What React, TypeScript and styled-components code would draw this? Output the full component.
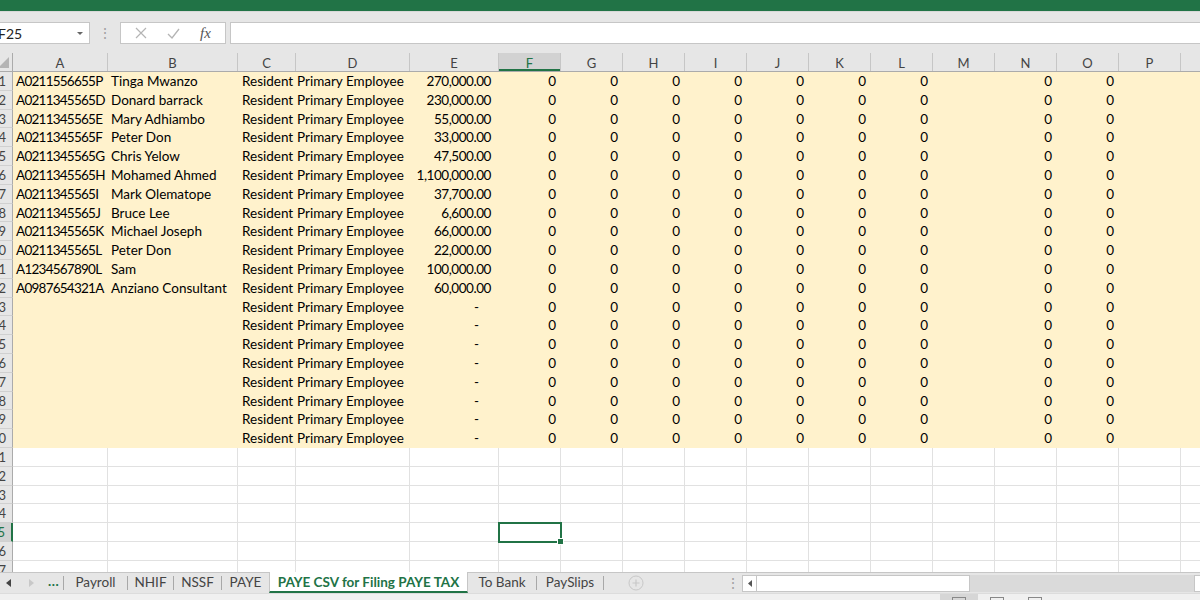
import React from "react";
import styled, { createGlobalStyle } from "styled-components";

const GlobalStyle = createGlobalStyle`
  html, body {
    margin: 0;
    padding: 0;
    background: #ffffff;
  }
  body {
    font-family: "Lato", "Liberation Sans", sans-serif;
  }
`;

const GREEN = "#217346";
const YELLOW = "#fff2cc";

const colWidths = [30, 95, 130, 58, 114, 89, ...Array(12).fill(62)];
const letters = "ABCDEFGHIJKLMNOPQ".split("");
const ROW_COUNT = 27;
const ROW_H = 18.8;

// integer row heights that add up to ~18.8px each, so grid lines stay crisp
const rowTrack = Array.from({ length: ROW_COUNT }, (_, i) =>
  Math.round((i + 1) * ROW_H) - Math.round(i * ROW_H)
)
  .map((h) => `${h}px`)
  .join(" ");

const people = [
  ["A0211556655P", "Tinga Mwanzo", "270,000.00"],
  ["A0211345565D", "Donard barrack", "230,000.00"],
  ["A0211345565E", "Mary Adhiambo", "55,000.00"],
  ["A0211345565F", "Peter Don", "33,000.00"],
  ["A0211345565G", "Chris Yelow", "47,500.00"],
  ["A0211345565H", "Mohamed Ahmed", "1,100,000.00"],
  ["A0211345565I", "Mark Olematope", "37,700.00"],
  ["A0211345565J", "Bruce Lee", "6,600.00"],
  ["A0211345565K", "Michael Joseph", "66,000.00"],
  ["A0211345565L", "Peter Don", "22,000.00"],
  ["A1234567890L", "Sam", "100,000.00"],
  ["A0987654321A", "Anziano Consultant", "60,000.00"],
];

const tabs = [
  { name: "Payroll", w: 63 },
  { name: "NHIF", w: 45 },
  { name: "NSSF", w: 47 },
  { name: "PAYE", w: 47 },
  { name: "PAYE CSV for Filing PAYE TAX", w: 199, active: true },
  { name: "To Bank", w: 68 },
  { name: "PaySlips", w: 66 },
];

const FILLED_ROWS = 20;
const SELECTED_ROW = 25;
const SELECTED_COL = 5; // F

type CellData = { text: string; align: "left" | "right"; pad: number; spacing?: number };

const getCell = (row: number, col: number): CellData => {
  const empty: CellData = { text: "", align: "left", pad: 3 };
  if (row > FILLED_ROWS) return empty;
  const p = people[row - 1];
  switch (col) {
    case 0:
      return { text: p ? p[0] : "", align: "left", pad: 3, spacing: -0.75 };
    case 1:
      return { text: p ? p[1] : "", align: "left", pad: 3 };
    case 2:
      return { text: "Resident", align: "left", pad: 4 };
    case 3:
      return { text: "Primary Employee", align: "left", pad: 1 };
    case 4:
      return p
        ? { text: p[2], align: "right", pad: 7, spacing: -0.45 }
        : { text: "-", align: "right", pad: 19 };
    case 12:
    case 15:
    case 16:
      return empty;
    default:
      return { text: "0", align: "right", pad: 4 };
  }
};

const App = () => {
  return (
    <>
      <GlobalStyle />
      <Window>
        <TitleStrip />
        <FormulaBar>
          <NameBox>
            <span>F25</span>
            <DropCaret />
          </NameBox>
          <Grip>⋮</Grip>
          <EditButtons>
            <EditIcon>
              <svg width="12" height="12" viewBox="0 0 12 12">
                <path d="M1 1 L11 11 M11 1 L1 11" stroke="#b4b4b4" strokeWidth="1.2" fill="none" />
              </svg>
            </EditIcon>
            <EditIcon>
              <svg width="13" height="11" viewBox="0 0 13 11">
                <path d="M1 6 L5 10 L12 1" stroke="#b4b4b4" strokeWidth="1.3" fill="none" />
              </svg>
            </EditIcon>
            <FxLabel>fx</FxLabel>
          </EditButtons>
          <FormulaInput />
        </FormulaBar>

        <Sheet>
          <HeaderRow $cols={colWidths}>
            <Corner />
            {letters.map((l, i) => (
              <ColHeader key={l} $active={i === SELECTED_COL}>
                {l}
              </ColHeader>
            ))}
          </HeaderRow>
          <CellGrid $cols={colWidths} $rows={rowTrack}>
            {Array.from({ length: ROW_COUNT }, (_, r) => {
              const row = r + 1;
              return (
                <React.Fragment key={row}>
                  <RowHeader $active={row === SELECTED_ROW}>{row}</RowHeader>
                  {letters.map((l, c) => {
                    const cell = getCell(row, c);
                    return (
                      <Cell
                        key={l}
                        $filled={row <= FILLED_ROWS}
                        $align={cell.align}
                        $pad={cell.pad}
                        $spacing={cell.spacing || 0}
                        $selected={row === SELECTED_ROW && c === SELECTED_COL}
                      >
                        {cell.text}
                      </Cell>
                    );
                  })}
                </React.Fragment>
              );
            })}
          </CellGrid>
        </Sheet>

        <TabBar>
          <NavArrows>
            <svg width="6" height="8" viewBox="0 0 6 8">
              <path d="M5 0 L0 4 L5 8 Z" fill="#444" />
            </svg>
            <svg width="6" height="8" viewBox="0 0 6 8">
              <path d="M1 0 L6 4 L1 8 Z" fill="#c8c8c8" />
            </svg>
            <More>...</More>
          </NavArrows>
          <Divider />
          {tabs.map((t, i) => {
            const next = tabs[i + 1];
            const showDivider = !t.active && !(next && next.active);
            return (
              <React.Fragment key={t.name}>
                <Tab $active={!!t.active} $w={t.w}>
                  {t.name}
                </Tab>
                {showDivider && <Divider />}
              </React.Fragment>
            );
          })}
          <AddSheet>
            <svg width="16" height="16" viewBox="0 0 16 16">
              <circle cx="8" cy="8" r="7" stroke="#c8c8c8" strokeWidth="1" fill="none" />
              <path d="M8 4.5 V11.5 M4.5 8 H11.5" stroke="#c8c8c8" strokeWidth="1.2" />
            </svg>
          </AddSheet>
          <ScrollArea>
            <Grip>⋮</Grip>
            <HScroll>
              <ScrollArrow>
                <svg width="4" height="7" viewBox="0 0 4 7">
                  <path d="M4 0 L0 3.5 L4 7 Z" fill="#555" />
                </svg>
              </ScrollArrow>
              <ScrollThumb />
              <ScrollTrack />
              <ScrollEnd />
            </HScroll>
          </ScrollArea>
        </TabBar>

        <StatusBar>
          <ViewGroup>
            <ViewIcon $active />
            <ViewIcon />
            <ViewIcon />
          </ViewGroup>
        </StatusBar>
      </Window>
    </>
  );
};

export default App;

const Window = styled.div`
  width: 1200px;
  height: 600px;
  display: flex;
  flex-direction: column;
  overflow: hidden;
  background: #e6e6e6;
  color: #000;
`;

const TitleStrip = styled.div`
  height: 11px;
  background: ${GREEN};
  flex-shrink: 0;
`;

const FormulaBar = styled.div`
  height: 42px;
  flex-shrink: 0;
  display: flex;
  align-items: flex-start;
  padding-top: 10px;
  box-sizing: border-box;
  background: #e6e6e6;
  border-top: 1px solid #d8d8d8;
`;

const NameBox = styled.div`
  width: 98px;
  margin-left: -8px;
  height: 22px;
  box-sizing: border-box;
  background: #fff;
  border: 1px solid #c6c6c6;
  display: flex;
  align-items: center;
  justify-content: space-between;
  padding: 0 6px 0 5px;
  font-size: 14px;
  color: #222;
`;

const DropCaret = styled.span`
  width: 0;
  height: 0;
  border-left: 3px solid transparent;
  border-right: 3px solid transparent;
  border-top: 3px solid #666;
`;

const Grip = styled.div`
  width: 30px;
  text-align: center;
  color: #a0a0a0;
  font-size: 14px;
  line-height: 22px;
`;

const EditButtons = styled.div`
  width: 106px;
  height: 22px;
  box-sizing: border-box;
  background: #fff;
  border: 1px solid #c6c6c6;
  display: flex;
  align-items: center;
  justify-content: space-around;
  padding: 0 4px;
`;

const EditIcon = styled.span`
  display: flex;
  align-items: center;
`;

const FxLabel = styled.span`
  font-family: "Liberation Serif", serif;
  font-style: italic;
  font-size: 15px;
  color: #555;
`;

const FormulaInput = styled.div`
  flex: 1;
  height: 22px;
  margin-left: 4px;
  box-sizing: border-box;
  background: #fff;
  border: 1px solid #c6c6c6;
  border-right: none;
`;

const Sheet = styled.div`
  flex: 1;
  overflow: hidden;
  background: #fff;
  display: flex;
  flex-direction: column;
`;

const HeaderRow = styled.div<{ $cols: number[] }>`
  display: grid;
  grid-template-columns: ${(p) => p.$cols.map((w) => `${w}px`).join(" ")};
  height: 19px;
  margin-left: -17px;
  flex-shrink: 0;
  background: #e6e6e6;
  border-bottom: 1px solid #ababab;
  box-sizing: border-box;
`;

const Corner = styled.div`
  position: relative;
  border-right: 1px solid #ababab;
  &::after {
    content: "";
    position: absolute;
    right: 3px;
    bottom: 3px;
    width: 0;
    height: 0;
    border-left: 11px solid transparent;
    border-bottom: 11px solid #b4b4b4;
  }
`;

const ColHeader = styled.div<{ $active?: boolean }>`
  display: flex;
  align-items: center;
  justify-content: center;
  font-size: 13px;
  color: ${(p) => (p.$active ? GREEN : "#444")};
  background: ${(p) => (p.$active ? "#d2d2d2" : "transparent")};
  border-right: 1px solid #c6c6c6;
  box-shadow: ${(p) => (p.$active ? `inset 0 -2px 0 ${GREEN}` : "none")};
  padding-top: 1px;
`;

const CellGrid = styled.div<{ $cols: number[]; $rows: string }>`
  display: grid;
  grid-template-columns: ${(p) => p.$cols.map((w) => `${w}px`).join(" ")};
  grid-template-rows: ${(p) => p.$rows};
  margin-left: -17px;
  font-size: 13.5px;
`;

const RowHeader = styled.div<{ $active?: boolean }>`
  display: flex;
  align-items: center;
  justify-content: flex-end;
  padding-right: 6px;
  font-size: 13px;
  color: ${(p) => (p.$active ? GREEN : "#444")};
  background: ${(p) => (p.$active ? "#d2d2d2" : "#e6e6e6")};
  border-bottom: 1px solid #d0d0d0;
  border-right: ${(p) => (p.$active ? `2px solid ${GREEN}` : "1px solid #ababab")};
  box-sizing: border-box;
`;

const Cell = styled.div<{
  $filled: boolean;
  $align: "left" | "right";
  $pad: number;
  $spacing: number;
  $selected: boolean;
}>`
  position: relative;
  display: flex;
  align-items: center;
  justify-content: ${(p) => (p.$align === "right" ? "flex-end" : "flex-start")};
  padding: ${(p) => (p.$align === "right" ? `0 ${p.$pad}px 0 0` : `0 0 0 ${p.$pad}px`)};
  white-space: nowrap;
  overflow: visible;
  letter-spacing: ${(p) => p.$spacing}px;
  background: ${(p) => (p.$filled ? YELLOW : "#fff")};
  border-right: 1px solid ${(p) => (p.$filled ? YELLOW : "#e1e1e1")};
  border-bottom: 1px solid ${(p) => (p.$filled ? YELLOW : "#e1e1e1")};
  box-sizing: border-box;
  outline: ${(p) => (p.$selected ? `2px solid ${GREEN}` : "none")};
  outline-offset: -1px;
  z-index: ${(p) => (p.$selected ? 1 : 0)};

  ${(p) =>
    p.$selected &&
    `
    &::after {
      content: "";
      position: absolute;
      right: -4px;
      bottom: -4px;
      width: 5px;
      height: 5px;
      background: ${GREEN};
      border: 1px solid #fff;
    }
  `}
`;

const TabBar = styled.div`
  height: 21px;
  flex-shrink: 0;
  display: flex;
  align-items: stretch;
  background: #e6e6e6;
  border-top: 1px solid #c6c6c6;
  box-sizing: border-box;
  font-size: 13.5px;
  color: #444;
`;

const NavArrows = styled.div`
  width: 63px;
  display: flex;
  align-items: center;
  gap: 16px;
  padding-left: 6px;
  box-sizing: border-box;
`;

const More = styled.span`
  color: ${GREEN};
  font-weight: bold;
  letter-spacing: 0.5px;
  margin-left: -2px;
  margin-top: -4px;
`;

const Divider = styled.div`
  width: 1px;
  background: #a8a8a8;
  margin: 3px 0 3px;
`;

const Tab = styled.div<{ $active?: boolean; $w: number }>`
  width: ${(p) => p.$w}px;
  display: flex;
  align-items: center;
  justify-content: center;
  box-sizing: border-box;
  background: ${(p) => (p.$active ? "#fff" : "transparent")};
  color: ${(p) => (p.$active ? GREEN : "#444")};
  font-weight: ${(p) => (p.$active ? 700 : 400)};
  border-bottom: 2px solid ${(p) => (p.$active ? GREEN : "transparent")};
  border-left: 1px solid ${(p) => (p.$active ? "#c6c6c6" : "transparent")};
  border-right: 1px solid ${(p) => (p.$active ? "#c6c6c6" : "transparent")};
  margin-top: -1px;
  white-space: nowrap;
`;

const AddSheet = styled.div`
  width: 64px;
  display: flex;
  align-items: center;
  justify-content: center;
`;

const ScrollArea = styled.div`
  flex: 1;
  display: flex;
  align-items: center;
  padding-left: 50px;
`;

const HScroll = styled.div`
  flex: 1;
  height: 17px;
  display: flex;
  margin-left: -6px;
`;

const ScrollArrow = styled.div`
  width: 14px;
  display: flex;
  align-items: center;
  justify-content: center;
  background: #fff;
  border: 1px solid #c6c6c6;
  border-right: none;
  box-sizing: border-box;
`;

const ScrollThumb = styled.div`
  width: 214px;
  background: #fff;
  border: 1px solid #c6c6c6;
  box-sizing: border-box;
`;

const ScrollTrack = styled.div`
  flex: 1;
  background: #dadada;
`;

const ScrollEnd = styled.div`
  width: 6px;
  background: #fff;
  border: 1px solid #c6c6c6;
  border-right: none;
  box-sizing: border-box;
`;

const StatusBar = styled.div`
  height: 7px;
  flex-shrink: 0;
  background: #f0f0f0;
  border-top: 1px solid #dcdcdc;
  display: flex;
  padding-left: 940px;
  box-sizing: border-box;
`;

const ViewGroup = styled.div`
  display: flex;
  gap: 0;
`;

const ViewIcon = styled.div<{ $active?: boolean }>`
  width: 38px;
  display: flex;
  justify-content: center;
  background: ${(p) => (p.$active ? "#d6d6d6" : "transparent")};
  &::before {
    content: "";
    width: 12px;
    height: 4px;
    margin-top: 3px;
    border: 1px solid #888;
    border-bottom: none;
  }
`;
